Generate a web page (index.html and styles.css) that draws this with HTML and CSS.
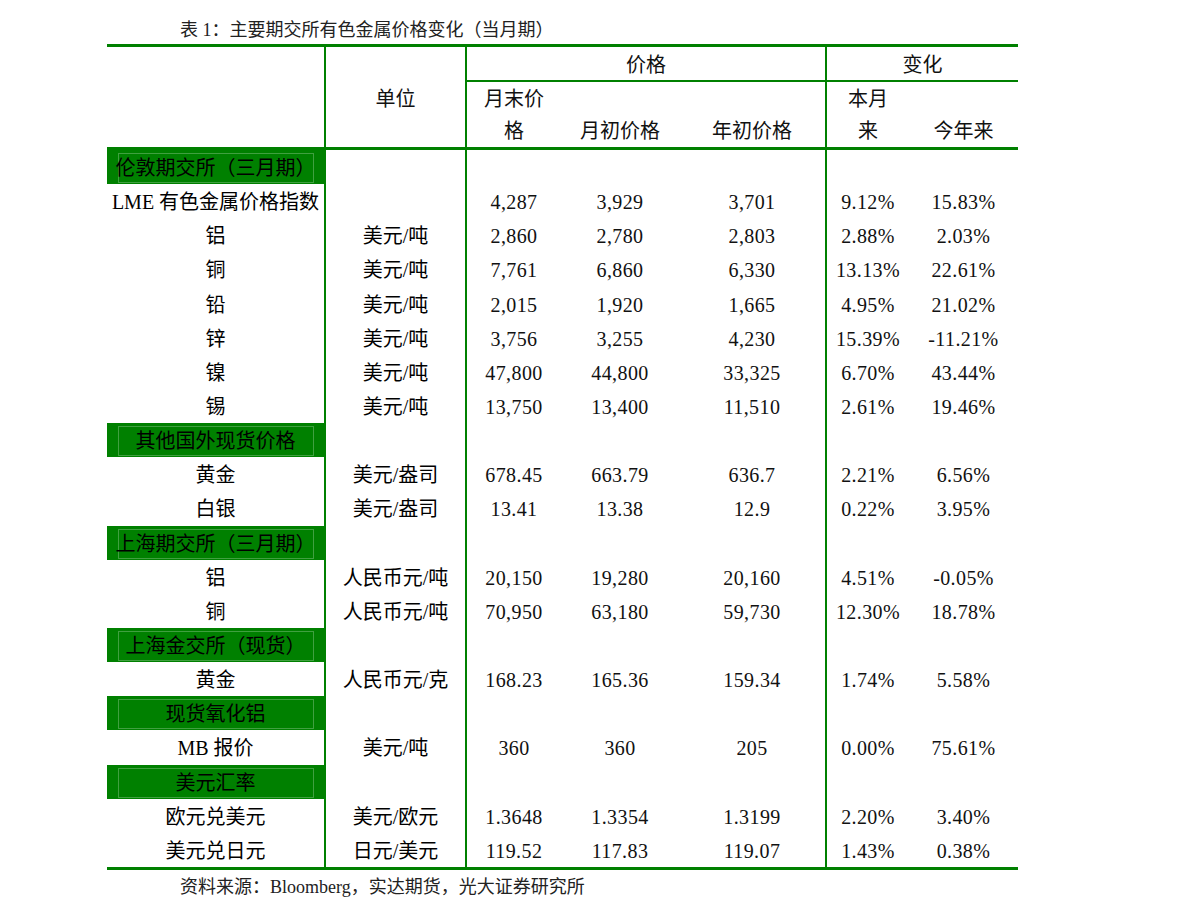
FILE: index.html
```html
<!DOCTYPE html>
<html lang="zh-CN">
<head>
<meta charset="utf-8">
<title>主要期交所有色金属价格变化</title>
<link rel="stylesheet" href="styles.css">
</head>
<body>
<div class="page">
  <p class="title">表 1：主要期交所有色金属价格变化（当月期）</p>
  <table class="prices">
    <colgroup>
      <col class="w1"><col class="w2"><col class="w3"><col class="w4"><col class="w5"><col class="w6"><col class="w7">
    </colgroup>
    <thead>
      <tr class="h1">
        <th class="c1 hb" rowspan="2"></th>
        <th class="c2 hb unit-h" rowspan="2">单位</th>
        <th class="c5 group" colspan="3">价格</th>
        <th class="group" colspan="2">变化</th>
      </tr>
      <tr class="h2">
        <th class="hb">月末价<br>格</th>
        <th class="hb">月初价格</th>
        <th class="c5 hb">年初价格</th>
        <th class="hb">本月<br>来</th>
        <th class="hb">今年来</th>
      </tr>
    </thead>
    <tbody>
      <tr class="r"><td class="c1 sec"><span class="sec-t">伦敦期交所（三月期）</span></td><td class="c2"></td><td></td><td></td><td class="c5"></td><td></td><td></td></tr>
      <tr class="r"><td class="c1">LME 有色金属价格指数</td><td class="c2"></td><td>4,287</td><td>3,929</td><td class="c5">3,701</td><td>9.12%</td><td>15.83%</td></tr>
      <tr class="r"><td class="c1">铝</td><td class="c2">美元/吨</td><td>2,860</td><td>2,780</td><td class="c5">2,803</td><td>2.88%</td><td>2.03%</td></tr>
      <tr class="r"><td class="c1">铜</td><td class="c2">美元/吨</td><td>7,761</td><td>6,860</td><td class="c5">6,330</td><td>13.13%</td><td>22.61%</td></tr>
      <tr class="r"><td class="c1">铅</td><td class="c2">美元/吨</td><td>2,015</td><td>1,920</td><td class="c5">1,665</td><td>4.95%</td><td>21.02%</td></tr>
      <tr class="r"><td class="c1">锌</td><td class="c2">美元/吨</td><td>3,756</td><td>3,255</td><td class="c5">4,230</td><td>15.39%</td><td>-11.21%</td></tr>
      <tr class="r"><td class="c1">镍</td><td class="c2">美元/吨</td><td>47,800</td><td>44,800</td><td class="c5">33,325</td><td>6.70%</td><td>43.44%</td></tr>
      <tr class="r"><td class="c1">锡</td><td class="c2">美元/吨</td><td>13,750</td><td>13,400</td><td class="c5">11,510</td><td>2.61%</td><td>19.46%</td></tr>
      <tr class="r"><td class="c1 sec"><span class="sec-t">其他国外现货价格</span></td><td class="c2"></td><td></td><td></td><td class="c5"></td><td></td><td></td></tr>
      <tr class="r"><td class="c1">黄金</td><td class="c2">美元/盎司</td><td>678.45</td><td>663.79</td><td class="c5">636.7</td><td>2.21%</td><td>6.56%</td></tr>
      <tr class="r"><td class="c1">白银</td><td class="c2">美元/盎司</td><td>13.41</td><td>13.38</td><td class="c5">12.9</td><td>0.22%</td><td>3.95%</td></tr>
      <tr class="r"><td class="c1 sec"><span class="sec-t">上海期交所（三月期）</span></td><td class="c2"></td><td></td><td></td><td class="c5"></td><td></td><td></td></tr>
      <tr class="r"><td class="c1">铝</td><td class="c2">人民币元/吨</td><td>20,150</td><td>19,280</td><td class="c5">20,160</td><td>4.51%</td><td>-0.05%</td></tr>
      <tr class="r"><td class="c1">铜</td><td class="c2">人民币元/吨</td><td>70,950</td><td>63,180</td><td class="c5">59,730</td><td>12.30%</td><td>18.78%</td></tr>
      <tr class="r"><td class="c1 sec"><span class="sec-t">上海金交所（现货）</span></td><td class="c2"></td><td></td><td></td><td class="c5"></td><td></td><td></td></tr>
      <tr class="r"><td class="c1">黄金</td><td class="c2">人民币元/克</td><td>168.23</td><td>165.36</td><td class="c5">159.34</td><td>1.74%</td><td>5.58%</td></tr>
      <tr class="r"><td class="c1 sec"><span class="sec-t">现货氧化铝</span></td><td class="c2"></td><td></td><td></td><td class="c5"></td><td></td><td></td></tr>
      <tr class="r"><td class="c1">MB 报价</td><td class="c2">美元/吨</td><td>360</td><td>360</td><td class="c5">205</td><td>0.00%</td><td>75.61%</td></tr>
      <tr class="r"><td class="c1 sec"><span class="sec-t">美元汇率</span></td><td class="c2"></td><td></td><td></td><td class="c5"></td><td></td><td></td></tr>
      <tr class="r"><td class="c1">欧元兑美元</td><td class="c2">美元/欧元</td><td>1.3648</td><td>1.3354</td><td class="c5">1.3199</td><td>2.20%</td><td>3.40%</td></tr>
      <tr class="r"><td class="c1">美元兑日元</td><td class="c2">日元/美元</td><td>119.52</td><td>117.83</td><td class="c5">119.07</td><td>1.43%</td><td>0.38%</td></tr>
    </tbody>
  </table>
  <p class="source">资料来源：Bloomberg，实达期货，光大证券研究所</p>
</div>
</body>
</html>
```

FILE: styles.css
```css
* {
  box-sizing: border-box;
}

body {
  margin: 0;
  background: #ffffff;
  font-family: "Liberation Serif", "Noto Sans CJK SC", serif;
  color: #111111;
}

.page {
  padding-top: 18px;
}

.title {
  margin: 0 0 2px 180px;
  font-size: 18px;
  line-height: 24px;
  color: #222222;
}

.prices {
  margin-left: 107px;
  width: 911px;
  table-layout: fixed;
  border-spacing: 0;
  border-top: 3px solid #008000;
  border-bottom: 3px solid #008000;
  font-size: 20px;
}

.w1 { width: 219px; }
.w2 { width: 141px; }
.w3 { width: 94px; }
.w4 { width: 118px; }
.w5 { width: 148px; }
.w6 { width: 82px; }
.w7 { width: 109px; }

.prices th,
.prices td {
  padding: 0;
  text-align: center;
  vertical-align: middle;
  white-space: nowrap;
  font-weight: normal;
}

.prices th {
  font-family: "Noto Sans CJK SC", sans-serif;
  color: #111111;
}

.c1,
.c2,
.c5 {
  border-right: 2px solid #008000;
}

.h1 {
  height: 35px;
}

.group {
  border-bottom: 2px solid #008000;
  padding-top: 4px;
  line-height: 28px;
}

.h2 {
  height: 66px;
}

.prices .h2 th {
  line-height: 32px;
  vertical-align: bottom;
  padding-bottom: 1px;
}

.hb {
  border-bottom: 3px solid #008000;
}

.unit-h {
  padding-top: 0;
}

.r {
  height: 34.15px;
}

.r td {
  line-height: 24px;
  letter-spacing: 0.4px;
  padding-top: 2px;
}

.r td.c1,
.r td.c2 {
  letter-spacing: 0;
  color: #000000;
}

.sec {
  position: relative;
  background: #008000;
}

.sec::before {
  content: "";
  position: absolute;
  left: 11px;
  right: 10px;
  top: 3px;
  bottom: 1px;
  border: 1px solid rgba(255, 255, 255, 0.25);
}

.sec-t {
  position: relative;
  color: #000000;
}

.source {
  margin: 5px 0 0 180px;
  font-size: 18px;
  line-height: 24px;
  color: #222222;
}
```
